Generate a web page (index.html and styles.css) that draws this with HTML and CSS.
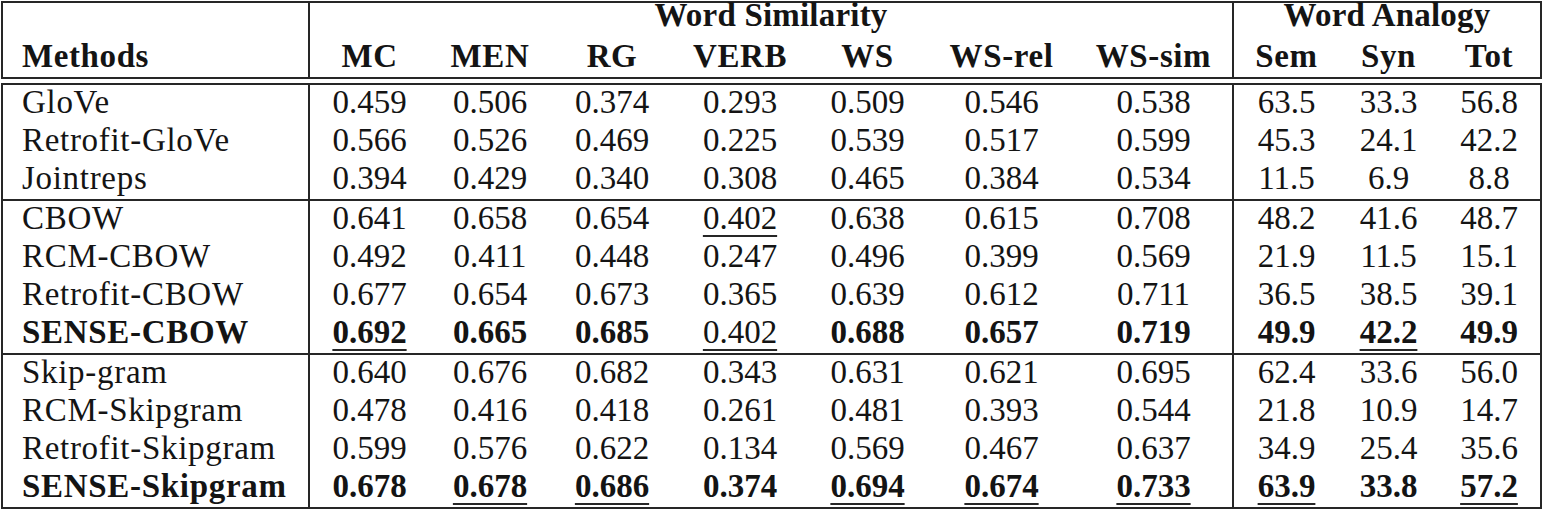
FILE: index.html
```html
<!DOCTYPE html>
<html>
<head>
<meta charset="utf-8">
<link rel="stylesheet" href="styles.css">
</head>
<body>
<div class="table">
  <div class="box head">
    <div class="grid hrow1">
      <div class="c sep"></div>
      <div class="c span-sim sep">Word Similarity</div>
      <div class="c span-ana">Word Analogy</div>
    </div>
    <div class="grid hrow2">
      <div class="c name sep">Methods</div>
      <div class="c">MC</div>
      <div class="c">MEN</div>
      <div class="c">RG</div>
      <div class="c">VERB</div>
      <div class="c">WS</div>
      <div class="c">WS-rel</div>
      <div class="c sep">WS-sim</div>
      <div class="c">Sem</div>
      <div class="c">Syn</div>
      <div class="c">Tot</div>
    </div>
  </div>
  <div class="box body">
    <div class="group">
      <div class="grid row"><div class="c name sep">GloVe</div><div class="c">0.459</div><div class="c">0.506</div><div class="c">0.374</div><div class="c">0.293</div><div class="c">0.509</div><div class="c">0.546</div><div class="c sep">0.538</div><div class="c">63.5</div><div class="c">33.3</div><div class="c">56.8</div></div>
      <div class="grid row"><div class="c name sep">Retrofit-GloVe</div><div class="c">0.566</div><div class="c">0.526</div><div class="c">0.469</div><div class="c">0.225</div><div class="c">0.539</div><div class="c">0.517</div><div class="c sep">0.599</div><div class="c">45.3</div><div class="c">24.1</div><div class="c">42.2</div></div>
      <div class="grid row"><div class="c name sep">Jointreps</div><div class="c">0.394</div><div class="c">0.429</div><div class="c">0.340</div><div class="c">0.308</div><div class="c">0.465</div><div class="c">0.384</div><div class="c sep">0.534</div><div class="c">11.5</div><div class="c">6.9</div><div class="c">8.8</div></div>
    </div>
    <div class="group ruled">
      <div class="grid row"><div class="c name sep">CBOW</div><div class="c">0.641</div><div class="c">0.658</div><div class="c">0.654</div><div class="c"><span class="u">0.402</span></div><div class="c">0.638</div><div class="c">0.615</div><div class="c sep">0.708</div><div class="c">48.2</div><div class="c">41.6</div><div class="c">48.7</div></div>
      <div class="grid row"><div class="c name sep">RCM-CBOW</div><div class="c">0.492</div><div class="c">0.411</div><div class="c">0.448</div><div class="c">0.247</div><div class="c">0.496</div><div class="c">0.399</div><div class="c sep">0.569</div><div class="c">21.9</div><div class="c">11.5</div><div class="c">15.1</div></div>
      <div class="grid row"><div class="c name sep">Retrofit-CBOW</div><div class="c">0.677</div><div class="c">0.654</div><div class="c">0.673</div><div class="c">0.365</div><div class="c">0.639</div><div class="c">0.612</div><div class="c sep">0.711</div><div class="c">36.5</div><div class="c">38.5</div><div class="c">39.1</div></div>
      <div class="grid row best"><div class="c name sep">SENSE-CBOW</div><div class="c"><span class="u">0.692</span></div><div class="c">0.665</div><div class="c">0.685</div><div class="c regular"><span class="u">0.402</span></div><div class="c">0.688</div><div class="c">0.657</div><div class="c sep">0.719</div><div class="c">49.9</div><div class="c"><span class="u">42.2</span></div><div class="c">49.9</div></div>
    </div>
    <div class="group ruled">
      <div class="grid row"><div class="c name sep">Skip-gram</div><div class="c">0.640</div><div class="c">0.676</div><div class="c">0.682</div><div class="c">0.343</div><div class="c">0.631</div><div class="c">0.621</div><div class="c sep">0.695</div><div class="c">62.4</div><div class="c">33.6</div><div class="c">56.0</div></div>
      <div class="grid row"><div class="c name sep">RCM-Skipgram</div><div class="c">0.478</div><div class="c">0.416</div><div class="c">0.418</div><div class="c">0.261</div><div class="c">0.481</div><div class="c">0.393</div><div class="c sep">0.544</div><div class="c">21.8</div><div class="c">10.9</div><div class="c">14.7</div></div>
      <div class="grid row"><div class="c name sep">Retrofit-Skipgram</div><div class="c">0.599</div><div class="c">0.576</div><div class="c">0.622</div><div class="c">0.134</div><div class="c">0.569</div><div class="c">0.467</div><div class="c sep">0.637</div><div class="c">34.9</div><div class="c">25.4</div><div class="c">35.6</div></div>
      <div class="grid row best"><div class="c name sep">SENSE-Skipgram</div><div class="c">0.678</div><div class="c"><span class="u">0.678</span></div><div class="c"><span class="u">0.686</span></div><div class="c">0.374</div><div class="c"><span class="u">0.694</span></div><div class="c"><span class="u">0.674</span></div><div class="c sep"><span class="u">0.733</span></div><div class="c"><span class="u">63.9</span></div><div class="c">33.8</div><div class="c"><span class="u">57.2</span></div></div>
    </div>
  </div>
</div>
</body>
</html>
```
FILE: styles.css
```css
html, body {
  margin: 0;
  padding: 0;
  background: #ffffff;
}

body {
  font-family: "Liberation Serif", "Times New Roman", serif;
  font-size: 33px;
  color: #141414;
}

.table {
  display: flex;
  flex-direction: column;
  gap: 4px;
  width: 1541px;
  margin: 1px 0 0 1px;
}

.box {
  border: 2px solid #262626;
}

.grid {
  display: grid;
  grid-template-columns: 307px 119px 122px 122px 134px 121px 147px 159px 105px 99px 102px;
}

.c {
  text-align: center;
  white-space: nowrap;
}

.sep {
  border-right: 2px solid #262626;
}

.name {
  text-align: left;
  padding-left: 19px;
  letter-spacing: 0.7px;
}

.head {
  font-weight: bold;
}

.hrow1 .c {
  line-height: 24px;
  padding-bottom: 12px;
  letter-spacing: 0.2px;
}

.span-sim {
  grid-column: 2 / span 7;
}

.span-ana {
  grid-column: 9 / span 3;
}

.hrow2 .c {
  line-height: 34px;
  padding-bottom: 4px;
  letter-spacing: 0.6px;
}

.row .c {
  line-height: 34px;
  padding-bottom: 4px;
}

.ruled {
  border-top: 2px solid #262626;
}

.best .c {
  font-weight: bold;
}

.best .c.regular {
  font-weight: normal;
}

.u {
  text-decoration: underline;
  text-decoration-thickness: 2px;
  text-underline-offset: 6px;
  text-decoration-color: #262626;
}
```
